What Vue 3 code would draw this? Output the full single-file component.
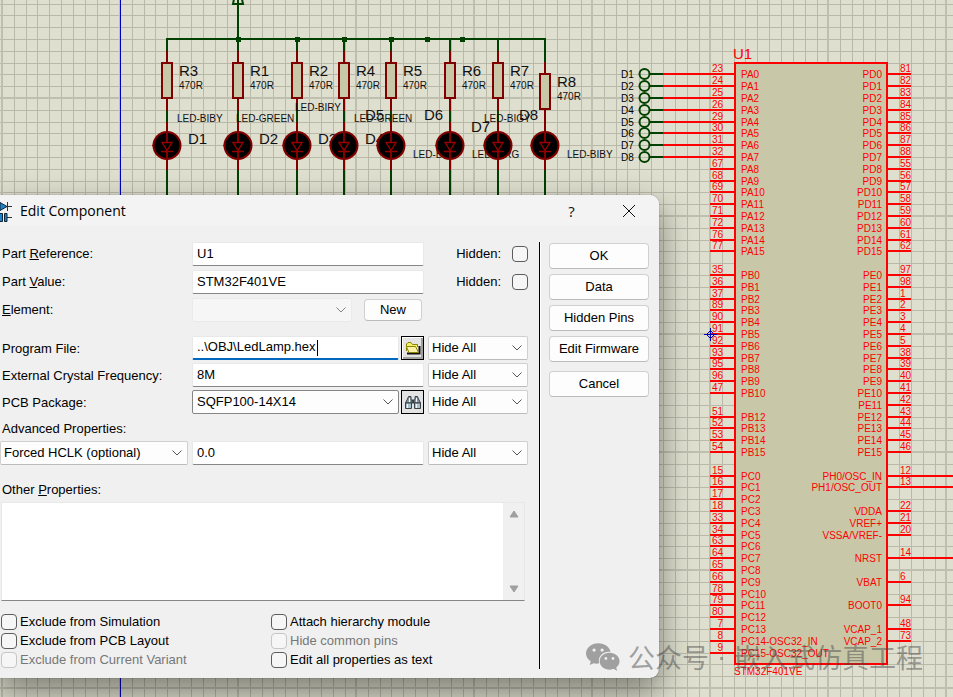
<script setup>
import { ref } from 'vue'

const tile = 118
const minorX = [13, 25, 36, 48, 60, 72, 84, 96, 108]
const minorY = [13, 25, 36, 48, 60, 72, 84, 95, 107]

const rowY = (k) => Math.round(74.3 + 11.8 * k)

const port = (prefix, first, numbers, skip = []) => {
  const rows = []
  let n = 0
  for (let i = 0; i < 16; i++) {
    if (skip.includes(i)) continue
    rows.push({ name: prefix + i, num: numbers[n++], y: rowY(first + i) })
  }
  return rows
}

const leftPins = [
  ...port('PA', 0, [23, 24, 25, 26, 29, 30, 31, 32, 67, 68, 69, 70, 71, 72, 76, 77]),
  ...port('PB', 17, [35, 36, 37, 89, 90, 91, 92, 93, 95, 96, 47, 51, 52, 53, 54], [11]),
  ...port('PC', 34, [15, 16, 17, 18, 33, 34, 63, 64, 65, 66, 78, 79, 80, 7, 8, 9]),
].map((p) => {
  if (p.name === 'PC14') return { ...p, name: 'PC14-OSC32_IN' }
  if (p.name === 'PC15') return { ...p, name: 'PC15-OSC32_OUT' }
  return p
})

const rightPins = [
  ...port('PD', 0, [81, 82, 83, 84, 85, 86, 87, 88, 55, 56, 57, 58, 59, 60, 61, 62]),
  ...port('PE', 17, [97, 98, 1, 2, 3, 4, 5, 38, 39, 40, 41, 42, 43, 44, 45, 46]),
  { name: 'PH0/OSC_IN', num: 12, y: rowY(34), long: true },
  { name: 'PH1/OSC_OUT', num: 13, y: rowY(35), long: true },
  { name: 'VDDA', num: 22, y: rowY(37) },
  { name: 'VREF+', num: 21, y: rowY(38) },
  { name: 'VSSA/VREF-', num: 20, y: rowY(39) },
  { name: 'NRST', num: 14, y: rowY(41), long: true },
  { name: 'VBAT', num: 6, y: rowY(43) },
  { name: 'BOOT0', num: 94, y: rowY(45) },
  { name: 'VCAP_1', num: 48, y: rowY(47) },
  { name: 'VCAP_2', num: 73, y: rowY(48) },
]

const terminals = Array.from({ length: 8 }, (_, i) => ({ name: `D${i + 1}`, y: rowY(i) }))

const branches = [
  { x: 167, r: 'R3', top: 63, d: 'D1', dx: 188, dy: 144, part: 'LED-BIBY', px: 177, py: 122 },
  { x: 238, r: 'R1', top: 63, d: 'D2', dx: 259, dy: 144, part: 'LED-GREEN', px: 236, py: 122 },
  { x: 297, r: 'R2', top: 63, d: 'D3', dx: 318, dy: 144, part: 'LED-BIRY', px: 295, py: 111 },
  { x: 344, r: 'R4', top: 63, d: 'D4', dx: 365, dy: 144, part: 'LED-GREEN', px: 354, py: 122 },
  { x: 391, r: 'R5', top: 63, d: 'D5', dx: 365, dy: 120, part: 'LED-BIBY', px: 413, py: 158 },
  { x: 450, r: 'R6', top: 63, d: 'D6', dx: 424, dy: 120, part: 'LED-BIRG', px: 472, py: 158 },
  { x: 498, r: 'R7', top: 63, d: 'D7', dx: 471, dy: 132, part: 'LED-BIGY', px: 484, py: 122 },
  { x: 545, r: 'R8', top: 74, d: 'D8', dx: 519, dy: 120, part: 'LED-BIBY', px: 567, py: 158 },
]
const junctions = [238, 297, 344, 391, 427, 462]

const reference = ref('U1')
const value = ref('STM32F401VE')
const program = ref('..\\OBJ\\LedLamp.hex')
const crystal = ref('8M')
const advanced = ref('0.0')
const other = ref('')
const visibility = ['Hide All', 'Show All', 'Hide Name', 'Hide Value']
</script>

<template>
  <main class="desktop">
    <svg class="sheet" role="img" aria-label="Schematic sheet">
      <defs>
        <pattern id="grid" x="1" y="97" :width="tile" :height="tile" patternUnits="userSpaceOnUse">
          <rect v-for="x in minorX" :key="'x' + x" class="minor" :x="x" y="0" width="1" :height="tile" />
          <rect v-for="y in minorY" :key="'y' + y" class="minor" x="0" :y="y" :width="tile" height="1" />
          <rect class="major" x="0" y="0" width="2" :height="tile" />
          <rect class="major" x="0" y="0" :width="tile" height="2" />
        </pattern>
      </defs>
      <rect width="100%" height="100%" fill="url(#grid)" />
      <rect class="border-line" x="120" y="0" width="1" height="100%" />

      <g class="wires">
        <path d="M238 0V39M166 39H546" />
        <path d="M233 4L235 -6H241L243 4Z" />
        <template v-for="b in branches" :key="b.r">
          <path :d="`M${b.x} 39V${b.top - 12}`" />
          <path v-if="b.top === 63" :d="`M${b.x} 111V122`" />
          <path :d="`M${b.x} 170V200`" />
        </template>
        <rect v-for="j in junctions" :key="j" class="junction" :x="j - 2" y="37" width="5" height="5" />
      </g>

      <g class="parts">
        <template v-for="b in branches" :key="b.r">
          <path :d="`M${b.x} ${b.top - 12}V${b.top}M${b.x} ${b.top + 35}V${b.top === 63 ? 111 : 124}M${b.x} 122V170`" />
          <rect class="resistor" :x="b.x - 5" :y="b.top" width="10" height="35" />
        </template>
      </g>

      <g class="notes">
        <template v-for="b in branches" :key="b.r">
          <text class="big" :x="b.x + 12" :y="b.top + 13">{{ b.r }}</text>
          <text :x="b.x + 12" :y="b.top + 26">470R</text>
          <text class="big" :x="b.dx" :y="b.dy">{{ b.d }}</text>
          <text :x="b.px" :y="b.py">{{ b.part }}</text>
        </template>
      </g>

      <g v-for="b in branches" :key="b.d" class="led">
        <circle :cx="b.x" cy="145.5" r="13.5" />
        <path :d="`M${b.x} 132V142M${b.x} 151V160`" />
        <path class="thin" :d="`M${b.x - 5} 142.5H${b.x + 5}L${b.x} 150.5ZM${b.x - 6} 151.5H${b.x + 6}M${b.x - 15} 145.5h2`" />
      </g>

      <g v-for="t in terminals" :key="t.name">
        <circle class="terminal" cx="644.5" :cy="t.y" r="5" />
        <path class="terminal" :d="`M649 ${t.y}H663`" />
        <path class="pin" :d="`M663 ${t.y}H712`" />
        <text x="621" :y="t.y + 4">{{ t.name }}</text>
      </g>

      <g class="chip">
        <rect class="body" x="735" y="63" width="152" height="601" />
        <text class="big" x="733" y="59">U1</text>
        <text x="734" y="675">STM32F401VE</text>
        <template v-for="p in leftPins" :key="p.name">
          <path class="pin" :d="`M710 ${p.y}H734`" />
          <text class="end" x="723" :y="p.y - 2">{{ p.num }}</text>
          <text x="741" :y="p.y + 4">{{ p.name }}</text>
        </template>
        <template v-for="p in rightPins" :key="p.name">
          <path class="pin" :d="`M888 ${p.y}H${p.long ? 4000 : 911}`" />
          <text x="900" :y="p.y - 2">{{ p.num }}</text>
          <text class="end" x="882" :y="p.y + 4">{{ p.name }}</text>
        </template>
      </g>

      <g class="origin">
        <path d="M704 334.5H717M710.5 328V341M706.5 334.5L710.5 330.5L714.5 334.5L710.5 338.5Z" />
      </g>
    </svg>

    <section class="dialog" role="dialog" aria-labelledby="dialog-title">
      <header class="titlebar">
        <svg class="app-icon" viewBox="0 0 12 22" aria-hidden="true">
          <path d="M0 6.5H12M7.500 2V11" stroke="#333" stroke-width="1" fill="none" />
          <path d="M0 2.500L7 6.500L0 10.500Z" fill="#1c84cc" stroke="#123" stroke-width="1" />
          <path d="M7 17.500H12" stroke="#333" fill="none" />
          <path d="M-1 13.500H2.500V21.500H-1ZM4.500 13.500H7V21.500H4.500Z" fill="#1c84cc" stroke="#123" stroke-width="1" />
        </svg>
        <h1 id="dialog-title">Edit Component</h1>
        <button type="button" class="caption" aria-label="Help">?</button>
        <button type="button" class="caption" aria-label="Close">
          <svg viewBox="0 0 14 14" class="close"><path d="M1 1L13 13M13 1L1 13" /></svg>
        </button>
      </header>

      <form class="content" @submit.prevent>
        <div class="main">
          <div class="row">
            <label for="ref">Part <u>R</u>eference:</label>
            <input id="ref" v-model="reference" class="field" type="text" />
            <span class="hidden-box"><label for="hide-ref">Hidden:</label><input id="hide-ref" class="check" type="checkbox" /></span>
          </div>
          <div class="row">
            <label for="val">Part <u>V</u>alue:</label>
            <input id="val" v-model="value" class="field" type="text" />
            <span class="hidden-box"><label for="hide-val">Hidden:</label><input id="hide-val" class="check" type="checkbox" /></span>
          </div>
          <div class="row element">
            <label for="element"><u>E</u>lement:</label>
            <select id="element" class="combo" disabled></select>
            <button type="button" class="push">New</button>
          </div>
          <div class="row tight">
            <label for="program">Program File:</label>
            <span class="with-tool">
              <span class="focus-field"><input id="program" v-model="program" class="field active" type="text" /><i class="caret"></i></span>
              <button type="button" class="tool raised" aria-label="Browse">
                <svg viewBox="0 0 16 16">
                  <path d="M2 13.500H14.500V6" fill="none" stroke="#111" stroke-width="2" />
                  <path d="M1.500 11V4L3 2.500H6L7.500 4.500H12.500V7" fill="#f3ef6a" stroke="#8a8400" />
                  <path d="M1.500 7L3 6.500H10.500L13.500 12.500H4Z" fill="#fbf2a8" stroke="#8a8400" />
                </svg>
              </button>
            </span>
            <select class="combo" aria-label="Program file visibility"><option v-for="v in visibility" :key="v">{{ v }}</option></select>
          </div>
          <div class="row tight">
            <label for="crystal">External Crystal Frequency:</label>
            <input id="crystal" v-model="crystal" class="field" type="text" />
            <select class="combo" aria-label="Crystal visibility"><option v-for="v in visibility" :key="v">{{ v }}</option></select>
          </div>
          <div class="row tight">
            <label for="package">PCB Package:</label>
            <span class="with-tool">
              <select id="package" class="combo strong"><option>SQFP100-14X14</option></select>
              <button type="button" class="tool" aria-label="Find package">
                <svg viewBox="0 0 16 16">
                  <path d="M3.500 2.500H6V5L7 7V9H.5L2.500 5ZM10 2.500H12.500L13.500 5L15.500 9H9V7L10 5Z" fill="#8b979e" stroke="#3a4248" />
                  <path d="M.5 9H6.500V14.500H.5ZM9.500 9H15.500V14.500H9.500Z" fill="#a9c0cc" stroke="#3a4248" />
                  <path d="M7 5.500H9V9.500H7Z" fill="#3a4248" />
                  <path d="M2.500 10V14M11.500 10V14M4.500 4V8M11.500 4V8" stroke="#eef6fa" />
                </svg>
              </button>
            </span>
            <select class="combo" aria-label="Package visibility"><option v-for="v in visibility" :key="v">{{ v }}</option></select>
          </div>

          <label class="caption-line" for="adv-name">Advanced Properties:</label>
          <div class="row advanced">
            <select id="adv-name" class="combo"><option>Forced HCLK (optional)</option></select>
            <input v-model="advanced" class="field" type="text" aria-label="Forced HCLK value" />
            <select class="combo" aria-label="Property visibility"><option v-for="v in visibility" :key="v">{{ v }}</option></select>
          </div>

          <label class="caption-line other" for="other">Other <u>P</u>roperties:</label>
          <div class="memo">
            <textarea id="other" v-model="other"></textarea>
            <div class="scroll" aria-hidden="true">
              <svg viewBox="0 0 10 8"><path d="M5 1L9 7H1Z" /></svg>
              <svg viewBox="0 0 10 8"><path d="M1 1H9L5 7Z" /></svg>
            </div>
          </div>

          <div class="options">
            <label><input class="check" type="checkbox" />Exclude from Simulation</label>
            <label><input class="check" type="checkbox" />Attach hierarchy module</label>
            <label><input class="check" type="checkbox" />Exclude from PCB Layout</label>
            <label class="off"><input class="check" type="checkbox" disabled />Hide common pins</label>
            <label class="off"><input class="check" type="checkbox" disabled />Exclude from Current Variant</label>
            <label><input class="check" type="checkbox" />Edit all properties as text</label>
          </div>
        </div>

        <div class="actions">
          <button type="button" class="push">OK</button>
          <button type="button" class="push">Data</button>
          <button type="button" class="push">Hidden Pins</button>
          <button type="button" class="push">Edit Firmware</button>
          <button type="button" class="push cancel">Cancel</button>
        </div>
      </form>
    </section>

    <div class="watermark">
      <svg viewBox="0 0 36 30" aria-hidden="true">
        <path fill-rule="evenodd" d="M13 0C20 0 25 4 26 9C18 8 12 14 14 21Q11 22 8 21L4 23L5 19C2 17 0 14 0 11C0 5 6 0 13 0ZM8.500 5.500a1.700 1.700 0 1 0 .1 0ZM17 5.500a1.700 1.700 0 1 0 .1 0Z" />
        <path fill-rule="evenodd" d="M25 10C31 10 35.500 14 35.500 19C35.500 22 34 24 32 25.500L33 29L29 27Q27 28 25 28C19 28 14.500 24 14.500 19C14.500 14 19 10 25 10ZM21 14.500a1.500 1.500 0 1 0 .1 0ZM28.500 14.500a1.500 1.500 0 1 0 .1 0Z" />
      </svg>
      <span>公众号</span>
      <span class="dot">·</span>
      <span>嵌入式仿真工程</span>
    </div>
  </main>
</template>

<style>
body {
  overflow: hidden;
}
</style>

<style scoped>
.desktop {
  position: relative;
  min-height: 100vh;
  overflow: hidden;
  background: #dfdfcf;
  font: 13px/16px "Liberation Sans", Arial, sans-serif;
  color: #000;
}

.desktop *,
.desktop *::before {
  box-sizing: border-box;
}

.sheet {
  position: absolute;
  inset: 0;
  width: 100%;
  height: 100%;
  font-size: 10px;
}

.minor { fill: #b9b9aa; }
.major { fill: #bfbfb0; }
.border-line { fill: #0000c0; }

.wires path,
.terminal {
  fill: none;
  stroke: #004000;
  stroke-width: 2;
}

.junction { fill: #004000; }
.notes { fill: #111; }

.parts path,
.led path,
.led circle {
  fill: none;
  stroke: #800000;
  stroke-width: 2;
}

.resistor {
  fill: #c8c8a8;
  stroke: #800000;
  stroke-width: 2;
}

.led circle { fill: #000; }

.led path.thin {
  stroke: #980000;
  stroke-width: 1.4;
}

.big { font-size: 15px; }

.pin {
  stroke: #f00;
  stroke-width: 2;
}

.chip text { fill: #f00; }
.chip .end { text-anchor: end; }

.body {
  fill: #c8c8a8;
  stroke: #f00;
  stroke-width: 2;
}

.origin path {
  fill: none;
  stroke: #0000c0;
  stroke-width: 1;
}

.dialog {
  position: absolute;
  top: 195px;
  left: 0;
  width: min(659px, 100%);
  background: #f0f0f0;
  border-radius: 0 9px 9px 0;
  box-shadow: 0 0 1px rgba(0, 0, 0, 0.6), 0 14px 32px 2px rgba(0, 0, 0, 0.42);
}

.titlebar {
  display: flex;
  align-items: center;
  height: 31px;
  padding-right: 2px;
  background: #f3f3f3;
  border-radius: 0 9px 0 0;
}

.app-icon {
  width: 12px;
  height: 22px;
}

h1 {
  flex: 1;
  margin: 0;
  padding-left: 8px;
  font: 14px/20px "Open Sans", "Noto Sans", sans-serif;
}

.caption {
  display: grid;
  place-items: center;
  width: 57px;
  height: 31px;
  padding: 0;
  border: 0;
  background: none;
  font: 15px/20px "Open Sans", "Noto Sans", sans-serif;
  color: #111;
}

.close {
  width: 14px;
  height: 14px;
  fill: none;
  stroke: #111;
}

.content {
  display: flex;
  padding: 16px 10px 9px 0;
}

.main {
  flex: 1;
  min-width: 0;
  padding-right: 11px;
  border-right: 1px solid #000;
  box-shadow: 1px 0 #fff;
}

.row {
  display: grid;
  grid-template-columns: 188px 1fr 100px;
  column-gap: 4px;
  align-items: center;
  height: 24px;
  margin-bottom: 4px;
}

.row label,
.caption-line {
  padding-left: 2px;
}

.row.element {
  grid-template-columns: 188px 160px 58px;
  column-gap: 4px;
  margin-bottom: 14px;
}

.row.element .push {
  height: 22px;
  margin-left: 8px;
  width: 58px;
}

.row.tight { margin-bottom: 3px; }
.row.tight label { padding-top: 2px; }

.field,
.combo {
  width: 100%;
  height: 24px;
  margin: 0;
  padding: 0 4px 2px;
  border: 1px solid #e8e8e8;
  border-radius: 2px;
  background: #fff;
  color: #000;
  font: inherit;
  outline: none;
}

.field { border-bottom-color: #868686; }
.field.active { border-bottom: 2px solid #0067c0; }

.combo {
  appearance: none;
  padding: 0 18px 0 3px;
  border-color: #d0d0d0;
  border-bottom-color: #bbb;
  background: #fdfdfd url("data:image/svg+xml,%3Csvg xmlns='http://www.w3.org/2000/svg' width='10' height='6'%3E%3Cpath d='M.5.5L5 5L9.500.5' fill='none' stroke='%23555'/%3E%3C/svg%3E") no-repeat right 5px center;
}

.combo:disabled {
  border-color: #e8e8e8;
  background-color: #f9f9f9;
  opacity: 0.7;
}

.combo.strong {
  padding-left: 4px;
  border-color: #868686;
}

.hidden-box {
  display: flex;
  align-items: center;
  justify-content: flex-end;
  gap: 11px;
}

.check {
  appearance: none;
  flex: none;
  width: 16px;
  height: 16px;
  margin: 0;
  border: 1px solid #5c5c5c;
  border-radius: 4px;
  background: #f6f6f6;
}

.check:disabled { border-color: #c6c6c6; }

.with-tool {
  display: grid;
  grid-template-columns: 1fr 23px;
  gap: 2px;
}

.focus-field {
  position: relative;
}

.caret {
  position: absolute;
  top: 4px;
  left: 125px;
  width: 1px;
  height: 16px;
  background: #000;
}

.tool {
  width: 23px;
  height: 24px;
  padding: 2px;
  border: 1px solid #000;
  background: #e3e3e3;
}

.tool.raised {
  box-shadow: inset 1px 1px #fff, inset -2px -2px #a0a0a0;
}

.tool svg {
  display: block;
  width: 16px;
  height: 16px;
  margin: auto;
}

.push {
  padding: 0;
  border: 1px solid #d0d0d0;
  border-bottom-color: #bbb;
  border-radius: 4px;
  background: #fdfdfd;
  color: #000;
  font: inherit;
}

.caption-line {
  display: block;
  height: 24px;
  line-height: 24px;
}

.row.advanced {
  grid-template-columns: 188px 1fr 100px;
  column-gap: 4px;
  margin-bottom: 0;
}

.caption-line.other {
  margin-top: 13px;
}

.memo {
  display: flex;
  height: 99px;
  margin: 0 3px 0 1px;
  border: 1px solid #e8e8e8;
  border-bottom-color: #868686;
  background: #fff;
}

.memo textarea {
  flex: 1;
  padding: 3px;
  border: 0;
  resize: none;
  outline: none;
  font: inherit;
}

.scroll {
  display: flex;
  flex-direction: column;
  justify-content: space-between;
  align-items: center;
  width: 21px;
  padding: 7px 0;
  background: #f0f0f0;
}

.scroll svg {
  width: 10px;
  height: 8px;
  fill: #a0a0a0;
  stroke: #a0a0a0;
  stroke-linejoin: round;
}

.options {
  display: grid;
  grid-template-columns: 270px 1fr;
  grid-auto-rows: 19px;
  margin-top: 11px;
  padding-left: 1px;
}

.options label {
  display: flex;
  align-items: center;
  gap: 3px;
}

.off { color: #777; }

.actions {
  display: flex;
  flex-direction: column;
  gap: 5px;
  width: 109px;
  padding: 1px 0 0 9px;
}

.actions .push { height: 26px; }
.actions .cancel { margin-top: 4px; }

.watermark {
  position: absolute;
  top: 638px;
  left: 586px;
  display: flex;
  align-items: center;
  gap: 8px;
  color: rgba(70, 70, 70, 0.48);
  font: 27px/38px "Noto Sans CJK SC", sans-serif;
  white-space: nowrap;
  pointer-events: none;
}

.watermark .dot {
  font-family: "Liberation Sans", sans-serif;
}

.watermark svg {
  width: 34px;
  height: 29px;
  fill: #a0a0a0;
}
</style>
